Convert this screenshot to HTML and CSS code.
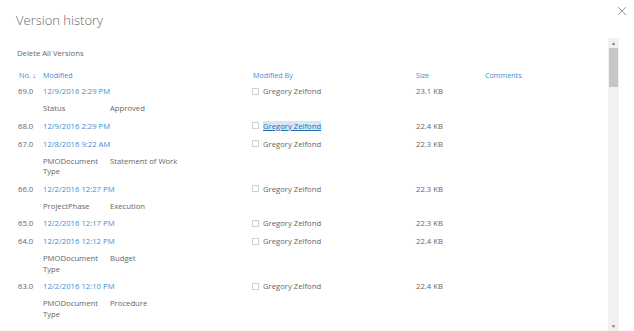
FILE: index.html
```html
<!DOCTYPE html>
<html>
<head>
<meta charset="utf-8">
<link rel="stylesheet" href="styles.css">
</head>
<body>
<div class="dialog">
  <div class="titlebar">
    <div class="title">Version history</div>
    <svg class="close" width="10" height="10" viewBox="0 0 10 10"><path d="M1 1 L9 9 M9 1 L1 9" stroke="#9a9a9a" stroke-width="1" fill="none"/></svg>
  </div>
  <div class="body">
    <div class="content">
      <div class="delete">Delete All Versions</div>
      <div class="row head">
        <div class="c-no">No. <span class="arrow">&#8595;</span></div>
        <div>Modified</div>
        <div>Modified By</div>
        <div>Size</div>
        <div>Comments</div>
      </div>

      <div class="row">
        <div class="c-no">69.0</div>
        <div class="date">12/9/2016 2:29 PM</div>
        <div class="user"><span class="chk"></span>Gregory Zelfond</div>
        <div>23.1 KB</div>
        <div></div>
      </div>
      <div class="detail"><div class="lbl">Status</div><div>Approved</div></div>

      <div class="row">
        <div class="c-no">68.0</div>
        <div class="date">12/9/2016 2:29 PM</div>
        <div class="user"><span class="chk"></span><span class="sel">Gregory Zelfond</span></div>
        <div>22.4 KB</div>
        <div></div>
      </div>

      <div class="row">
        <div class="c-no">67.0</div>
        <div class="date">12/8/2016 9:22 AM</div>
        <div class="user"><span class="chk"></span>Gregory Zelfond</div>
        <div>22.3 KB</div>
        <div></div>
      </div>
      <div class="detail"><div class="lbl">PMODocument Type</div><div>Statement of Work</div></div>

      <div class="row">
        <div class="c-no">66.0</div>
        <div class="date">12/2/2016 12:27 PM</div>
        <div class="user"><span class="chk"></span>Gregory Zelfond</div>
        <div>22.3 KB</div>
        <div></div>
      </div>
      <div class="detail"><div class="lbl">ProjectPhase</div><div>Execution</div></div>

      <div class="row">
        <div class="c-no">65.0</div>
        <div class="date">12/2/2016 12:17 PM</div>
        <div class="user"><span class="chk"></span>Gregory Zelfond</div>
        <div>22.3 KB</div>
        <div></div>
      </div>

      <div class="row">
        <div class="c-no">64.0</div>
        <div class="date">12/2/2016 12:12 PM</div>
        <div class="user"><span class="chk"></span>Gregory Zelfond</div>
        <div>22.4 KB</div>
        <div></div>
      </div>
      <div class="detail"><div class="lbl">PMODocument Type</div><div>Budget</div></div>

      <div class="row">
        <div class="c-no">63.0</div>
        <div class="date">12/2/2016 12:10 PM</div>
        <div class="user"><span class="chk"></span>Gregory Zelfond</div>
        <div>22.4 KB</div>
        <div></div>
      </div>
      <div class="detail"><div class="lbl">PMODocument Type</div><div>Procedure</div></div>
    </div>
    <div class="scrollbar">
      <div class="sb-up">&#9650;</div>
      <div class="sb-thumb"></div>
      <div class="sb-track"></div>
      <div class="sb-down">&#9660;</div>
    </div>
  </div>
</div>
</body>
</html>
```

FILE: styles.css
```css
html, body {
  margin: 0;
  padding: 0;
  background: #fff;
  height: 100%;
  overflow: hidden;
}
body {
  font-family: "Open Sans", "Noto Sans", sans-serif;
  font-size: 7.7px;
  color: #666;
}
.dialog {
  height: 331px;
  display: flex;
  flex-direction: column;
}
.titlebar {
  display: flex;
  justify-content: space-between;
  align-items: flex-start;
  padding: 10px 7px 0 16px;
  height: 28px;
}
.title {
  font-size: 13px;
  font-weight: 300;
  line-height: 20px;
  color: #666;
}
.close {
  margin-top: -4px;
}
.body {
  flex: 1;
  display: flex;
  min-height: 0;
  overflow: hidden;
}
.content {
  flex: 1;
  padding-left: 17px;
  padding-top: 8px;
}
.delete {
  line-height: 14px;
  color: #666;
  margin-bottom: 7px;
}
.row {
  display: grid;
  grid-template-columns: 26px 210px 163px 69px 1fr;
  height: 18px;
  align-items: center;
  white-space: nowrap;
}
.row.head {
  height: 15px;
  color: #3a90d8;
  font-size: 7.2px;
}
.c-no {
  padding-left: 1px;
}
.row.head .c-no {
  padding-left: 2px;
}
.arrow {
  color: #555;
  font-size: 7px;
}
.date {
  color: #3a8fd8;
}
.user {
  display: flex;
  align-items: center;
}
.chk {
  width: 5px;
  height: 5px;
  border: 1px solid #d0d0d0;
  margin-right: 4px;
  margin-left: -1px;
}
.sel {
  color: #1f6fb5;
  text-decoration: underline;
  background: #d6e8f7;
}
.detail {
  display: grid;
  grid-template-columns: 67px 1fr;
  margin-left: 26px;
  padding: 3px 0;
  line-height: 10.5px;
}
.lbl {
  width: 56px;
}
.scrollbar {
  width: 11px;
  margin-right: 15px;
  background: #f1f1f1;
  display: flex;
  flex-direction: column;
  align-items: center;
}
.sb-up, .sb-down {
  height: 10px;
  font-size: 5px;
  line-height: 10px;
  color: #777;
}
.sb-thumb {
  width: 9px;
  height: 39px;
  background: #c6c6c6;
}
.sb-track {
  flex: 1;
}
```
